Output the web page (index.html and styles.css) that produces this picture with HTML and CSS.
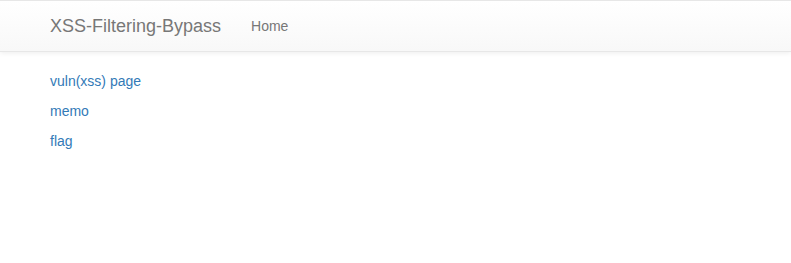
FILE: index.html
```html
<!DOCTYPE html>
<html>
<head>
<meta charset="utf-8">
<link rel="stylesheet" href="styles.css">
</head>
<body>
<nav class="navbar">
  <div class="container nav-inner">
    <a class="brand" href="#">XSS-Filtering-Bypass</a>
    <ul class="nav">
      <li><a href="#">Home</a></li>
    </ul>
  </div>
</nav>
<div class="container content">
  <a class="item" href="#">vuln(xss) page</a>
  <a class="item" href="#">memo</a>
  <a class="item" href="#">flag</a>
</div>
</body>
</html>
```
FILE: styles.css
```css
html, body { margin: 0; padding: 0; }
body {
  font-family: "Liberation Sans", Arial, Helvetica, sans-serif;
  font-size: 14px;
  line-height: 20px;
  color: #333;
  background: #fff;
}
.navbar {
  height: 50px;
  border: 1px solid #e7e7e7;
  border-left: 0;
  border-right: 0;
  background-image: linear-gradient(to bottom, #fff 0%, #f8f8f8 100%);
  box-shadow: inset 0 1px 0 rgba(255,255,255,.15), 0 1px 5px rgba(0,0,0,.075);
  margin-bottom: 19px;
}
.container {
  padding: 0 35px;
}
.nav-inner {
  display: flex;
  align-items: stretch;
  height: 50px;
}
.brand {
  font-size: 18px;
  line-height: 20px;
  padding: 15px 15px 15px 15px;
  margin-left: 0;
  color: #777;
  text-decoration: none;
}
.nav {
  list-style: none;
  margin: 0;
  padding: 0;
  display: flex;
}
.nav a {
  display: block;
  padding: 15px 15px;
  line-height: 20px;
  color: #777;
  text-decoration: none;
}
.content {
  display: flex;
  flex-direction: column;
  align-items: flex-start;
  padding-left: 50px;
  gap: 10px;
}
.item {
  color: #337ab7;
  text-decoration: none;
}
```
